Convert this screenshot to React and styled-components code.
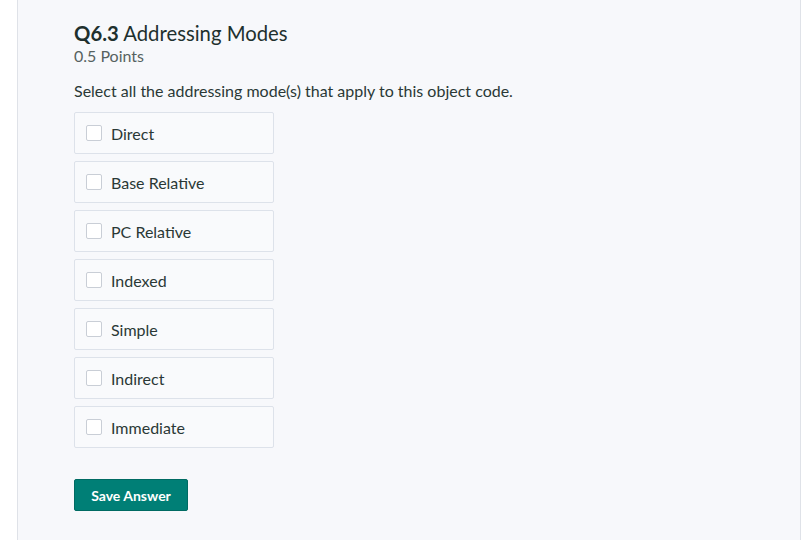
import styled, { createGlobalStyle } from "styled-components";

const Global = createGlobalStyle`
  html, body {
    margin: 0;
    padding: 0;
    background: #ffffff;
  }
  body {
    font-family: "Lato", "Open Sans", sans-serif;
    color: #2a3836;
  }
`;

const Page = styled.div`
  display: flex;
  height: 540px;
  padding-left: 17px;
  box-sizing: border-box;
`;

const Panel = styled.div`
  flex: 1;
  background: #f7f8fb;
  border-left: 1px solid #dfe2e8;
  border-right: 1px solid #dfe2e8;
  padding: 20px 0 0 56px;
  box-sizing: border-box;
`;

const Title = styled.h2`
  margin: 0;
  font-size: 20.3px;
  font-weight: 400;
  color: #1e302e;
  line-height: 26px;

  b {
    font-weight: 700;
  }
`;

const Points = styled.div`
  font-size: 16px;
  color: #56625f;
  line-height: 20px;
`;

const Prompt = styled.p`
  margin: 15px 0 11px;
  font-size: 16px;
  line-height: 20px;
  color: #2a3836;
`;

const Options = styled.div`
  display: flex;
  flex-direction: column;
  gap: 7px;
`;

const Option = styled.label`
  display: flex;
  align-items: center;
  gap: 9px;
  width: 200px;
  height: 42px;
  box-sizing: border-box;
  padding: 0 11px;
  background: #f9fafc;
  border: 1px solid #dde2ea;
  border-radius: 2px;
  font-size: 16px;
  color: #2a3836;
`;

const Box = styled.span`
  width: 16px;
  height: 16px;
  box-sizing: border-box;
  border: 1px solid #c9ced6;
  border-radius: 2px;
  background: #ffffff;
  flex-shrink: 0;
`;

const SaveButton = styled.button`
  margin-top: 31px;
  width: 114px;
  height: 32px;
  background: #007f76;
  border: 1px solid #006b63;
  border-radius: 2px;
  color: #ffffff;
  font-family: "Lato", sans-serif;
  font-size: 14px;
  font-weight: 700;
  cursor: pointer;
`;

const modes = [
  "Direct",
  "Base Relative",
  "PC Relative",
  "Indexed",
  "Simple",
  "Indirect",
  "Immediate",
];

export default function App() {
  return (
    <>
      <Global />
      <Page>
        <Panel>
          <Title>
            <b>Q6.3</b> Addressing Modes
          </Title>
          <Points>0.5 Points</Points>
          <Prompt>
            Select all the addressing mode(s) that apply to this object code.
          </Prompt>
          <Options>
            {modes.map((m) => (
              <Option key={m}>
                <Box />
                {m}
              </Option>
            ))}
          </Options>
          <SaveButton>Save Answer</SaveButton>
        </Panel>
      </Page>
    </>
  );
}
